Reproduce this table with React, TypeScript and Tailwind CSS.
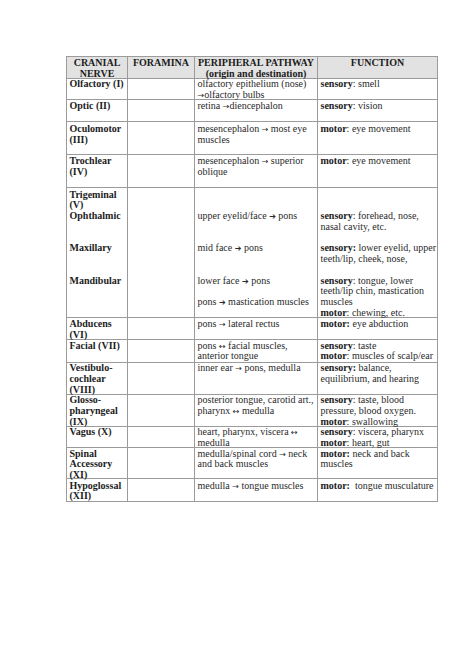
import type { ReactNode } from 'react'

// a line of text; null = empty paragraph, [bold, rest] = labelled line
type Line = string | [string, string] | null

interface Row {
  h: string
  pt: string
  nerve: Line[]
  pathway: Line[]
  func: Line[]
}

const rows: Row[] = [
  {
    h: 'h-[20px]',
    pt: 'pt-[0px]',
    nerve: ['Olfactory (I)'],
    pathway: ['olfactory epithelium (nose)', '→olfactory bulbs'],
    func: [['sensory', ': smell']],
  },
  {
    h: 'h-[21px]',
    pt: 'pt-[1px]',
    nerve: ['Optic (II)'],
    pathway: ['retina →diencephalon'],
    func: [['sensory', ': vision']],
  },
  {
    h: 'h-[32px]',
    pt: 'pt-[2px]',
    nerve: ['Oculomotor', '(III)'],
    pathway: ['mesencephalon → most eye', 'muscles'],
    func: [['motor', ': eye movement']],
  },
  {
    h: 'h-[32px]',
    pt: 'pt-[1px]',
    nerve: ['Trochlear', '(IV)'],
    pathway: ['mesencephalon → superior', 'oblique'],
    func: [['motor', ': eye movement']],
  },
  {
    h: 'h-[129px]',
    pt: 'pt-[1.5px]',
    nerve: ['Trigeminal', '(V)', 'Ophthalmic', null, null, 'Maxillary', null, null, 'Mandibular'],
    pathway: [
      null,
      null,
      'upper eyelid/face ➔ pons',
      null,
      null,
      'mid face ➔ pons',
      null,
      null,
      'lower face ➔ pons',
      null,
      'pons ➔ mastication muscles',
    ],
    func: [
      null,
      null,
      ['sensory', ': forehead, nose,'],
      'nasal cavity, etc.',
      null,
      ['sensory:', ' lower eyelid, upper'],
      'teeth/lip, cheek, nose,',
      null,
      ['sensory', ': tongue, lower'],
      'teeth/lip chin, mastication',
      'muscles',
      ['motor', ': chewing, etc.'],
    ],
  },
  {
    h: 'h-[21px]',
    pt: 'pt-[1px]',
    nerve: ['Abducens', '(VI)'],
    pathway: ['pons → lateral rectus'],
    func: [['motor:', ' eye abduction']],
  },
  {
    h: 'h-[22px]',
    pt: 'pt-[0.5px]',
    nerve: ['Facial (VII)'],
    pathway: ['pons ↔ facial muscles,', 'anterior tongue'],
    func: [['sensory', ': taste'], ['motor', ': muscles of scalp/ear']],
  },
  {
    h: 'h-[31px]',
    pt: 'pt-[0px]',
    nerve: ['Vestibulo-', 'cochlear', '(VIII)'],
    pathway: ['inner ear → pons, medulla'],
    func: [['sensory:', ' balance,'], 'equilibrium, and hearing'],
  },
  {
    h: 'h-[31px]',
    pt: 'pt-[0px]',
    nerve: ['Glosso-', 'pharyngeal', '(IX)'],
    pathway: ['posterior tongue, carotid art.,', 'pharynx ↔ medulla'],
    func: [['sensory', ': taste, blood'], 'pressure, blood oxygen.', ['motor', ': swallowing']],
  },
  {
    h: 'h-[20px]',
    pt: 'pt-[0px]',
    nerve: ['Vagus (X)'],
    pathway: ['heart, pharynx, viscera ↔', 'medulla'],
    func: [['sensory', ': viscera, pharynx'], ['motor', ': heart, gut']],
  },
  {
    h: 'h-[30px]',
    pt: 'pt-[0.5px]',
    nerve: ['Spinal', 'Accessory', '(XI)'],
    pathway: ['medulla/spinal cord → neck', 'and back muscles'],
    func: [['motor:', ' neck and back'], 'muscles'],
  },
  {
    h: 'h-[22px]',
    pt: 'pt-[1.5px]',
    nerve: ['Hypoglossal', '(XII)'],
    pathway: ['medulla → tongue muscles'],
    func: [['motor:', '  tongue musculature']],
  },
]

// arrows come from a sans font so they read like the symbol-font arrows of the print
function withArrows(s: string): ReactNode {
  return s.split(/([→↔➔])/).map((part, i) =>
    /[→↔➔]/.test(part) ? (
      <span key={i} className="font-['DejaVu_Sans',sans-serif] text-[8px]">
        {part}
      </span>
    ) : (
      part
    ),
  )
}

function Lines({ lines, bold }: { lines: Line[]; bold?: boolean }) {
  return (
    <>
      {lines.map((l, i) => {
        let content: ReactNode = '\u00a0'
        if (typeof l === 'string') content = withArrows(l)
        else if (Array.isArray(l))
          content = (
            <>
              <span className="font-bold text-[#1c1c1c]">{l[0]}</span>
              {l[1]}
            </>
          )
        return (
          <div
            key={i}
            className={`h-[10.75px] leading-[10.75px] whitespace-pre ${bold ? 'font-bold text-[#1c1c1c]' : ''}`}
          >
            {content}
          </div>
        )
      })}
    </>
  )
}

// cell body: fixed height, text may run past it like in the printed table
function Cell({ h, pt, children }: { h: string; pt: string; children?: ReactNode }) {
  return <div className={`${h} ${pt} overflow-visible`}>{children}</div>
}

const cell = 'border border-[#9b9b9b] align-top px-[2.5px] py-0'

export default function App() {
  return (
    <div className="min-h-[669px] w-[474px] bg-white pt-[56px] pl-[66px] font-['Liberation_Serif',serif] text-[10px] text-[#2a2a2a]">
      <table className="table-fixed border-collapse w-[371px]">
        <colgroup>
          <col className="w-[61px]" />
          <col className="w-[67px]" />
          <col className="w-[123px]" />
          <col className="w-[120px]" />
        </colgroup>
        <thead>
          <tr className="bg-[#e2e2e2] font-bold text-[#1c1c1c] text-center">
            <th className={cell}>
              <Cell h="h-[21px]" pt="pt-[1px]">
                <Lines lines={['CRANIAL', 'NERVE']} />
              </Cell>
            </th>
            <th className={cell}>
              <Cell h="h-[21px]" pt="pt-[1px]">
                <Lines lines={['FORAMINA']} />
              </Cell>
            </th>
            <th className={cell}>
              <Cell h="h-[21px]" pt="pt-[1px]">
                <Lines lines={['PERIPHERAL PATHWAY', '(origin and destination)']} />
              </Cell>
            </th>
            <th className={cell}>
              <Cell h="h-[21px]" pt="pt-[1px]">
                <Lines lines={['FUNCTION']} />
              </Cell>
            </th>
          </tr>
        </thead>
        <tbody>
          {rows.map((r, i) => (
            <tr key={i}>
              <td className={cell}>
                <Cell h={r.h} pt={r.pt}>
                  <Lines lines={r.nerve} bold />
                </Cell>
              </td>
              <td className={cell}>
                <Cell h={r.h} pt={r.pt} />
              </td>
              <td className={cell}>
                <Cell h={r.h} pt={r.pt}>
                  <Lines lines={r.pathway} />
                </Cell>
              </td>
              <td className={cell}>
                <Cell h={r.h} pt={r.pt}>
                  <Lines lines={r.func} />
                </Cell>
              </td>
            </tr>
          ))}
        </tbody>
      </table>
    </div>
  )
}
